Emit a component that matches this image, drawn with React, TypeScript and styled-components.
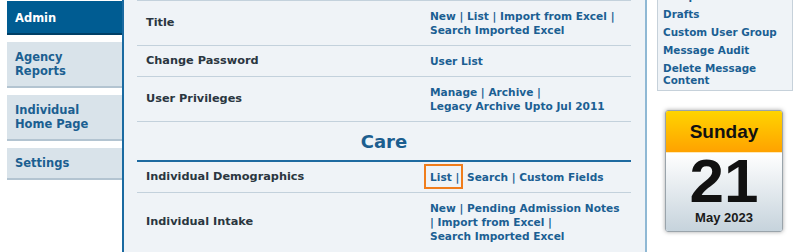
import React from "react";
import styled, { createGlobalStyle } from "styled-components";

const GlobalStyle = createGlobalStyle`
  html, body {
    margin: 0;
    padding: 0;
    background: #ffffff;
    overflow: hidden;
  }
  body {
    font-family: "DejaVu Sans", Verdana, sans-serif;
  }
`;

type Row = { label: string; links: string[]; highlight?: number };

const adminRows: Row[] = [
  { label: "Title", links: ["New", "List", "Import from Excel", "Search Imported Excel"] },
  { label: "Change Password", links: ["User List"] },
  { label: "User Privileges", links: ["Manage", "Archive", "Legacy Archive Upto Jul 2011"] },
];

const careRows: Row[] = [
  { label: "Individual Demographics", links: ["List", "Search", "Custom Fields"], highlight: 0 },
  {
    label: "Individual Intake",
    links: ["New", "Pending Admission Notes", "Import from Excel", "Search Imported Excel"],
  },
];

const tabs = [
  { label: "Admin", active: true },
  { label: "Agency Reports" },
  { label: "Individual Home Page" },
  { label: "Settings" },
];

const messageLinks = ["Compose", "Drafts", "Custom User Group", "Message Audit", "Delete Message Content"];

// links never break inside, only around the " | " separators
const LinkList = ({ links, highlight }: { links: string[]; highlight?: number }) => (
  <Links>
    {links.map((l, i) => {
      const last = i === links.length - 1;
      if (highlight === i) {
        return (
          <React.Fragment key={l}>
            <Highlight>
              <LinkText href="#">{l}</LinkText>
              {!last && " |"}
            </Highlight>{" "}
          </React.Fragment>
        );
      }
      return (
        <React.Fragment key={l}>
          <LinkText href="#">{l}</LinkText>
          {!last && " | "}
        </React.Fragment>
      );
    })}
  </Links>
);

const App = () => {
  return (
    <>
      <GlobalStyle />
      <Page>
        <Nav>
          {tabs.map((t) => (
            <Tab key={t.label} $active={t.active}>
              {t.label}
            </Tab>
          ))}
        </Nav>
        <Main>
          <Table>
            {adminRows.map((r, i) => (
              <TableRow key={r.label} $first={i === 0}>
                <Label>{r.label}</Label>
                <LinkList links={r.links} />
              </TableRow>
            ))}
            <SectionHead>Care</SectionHead>
            {careRows.map((r) => (
              <TableRow key={r.label}>
                <Label>{r.label}</Label>
                <LinkList links={r.links} highlight={r.highlight} />
              </TableRow>
            ))}
          </Table>
        </Main>
        <Side>
          <MessagePanel>
            {messageLinks.map((m) => (
              <SideLink key={m} href="#">
                {m}
              </SideLink>
            ))}
          </MessagePanel>
          <Calendar>
            <CalHead>Sunday</CalHead>
            <CalBody>
              <CalDay>21</CalDay>
              <CalMonth>May 2023</CalMonth>
            </CalBody>
          </Calendar>
        </Side>
      </Page>
    </>
  );
};

export default App;

const Page = styled.div`
  display: flex;
  align-items: flex-start;
  height: 100vh;
`;

const Nav = styled.div`
  display: flex;
  flex-direction: column;
  gap: 7px;
  width: 115px;
  flex-shrink: 0;
  margin: 1px 0 0 7px;
`;

const Tab = styled.div<{ $active?: boolean }>`
  padding: ${(p) => (p.$active ? "10px 8px 8px" : "8px")};
  font-size: 11.5px;
  font-weight: bold;
  line-height: 14px;
  color: ${(p) => (p.$active ? "#ffffff" : "#1b5f91")};
  background: ${(p) => (p.$active ? "#005c92" : "#d9e3ea")};
  border-bottom: 2px solid ${(p) => (p.$active ? "#003f66" : "#b3c4d1")};
`;

const Main = styled.div`
  width: 494px;
  flex-shrink: 0;
  height: 100%;
  padding: 0 14px 0 13px;
  background: #eff3f7;
  border-left: 2px solid #1a6aa1;
  border-right: 2px solid #8fb8d4;
`;

const Table = styled.div`
  display: flex;
  flex-direction: column;
`;

const TableRow = styled.div<{ $first?: boolean }>`
  display: grid;
  grid-template-columns: 293px 194px;
  align-items: center;
  padding: 8px 0;
  border-top: ${(p) => (p.$first ? "1px solid #c3d1dc" : "none")};
  border-bottom: 1px solid #c3d1dc;

  &:last-child {
    border-bottom: none;
  }
`;

const Label = styled.div`
  padding-left: 9px;
  font-size: 11.3px;
  font-weight: bold;
  color: #2a3640;
  line-height: 14px;
`;

const Links = styled.div`
  font-size: 10.6px;
  font-weight: bold;
  line-height: 14px;
  color: #1b5f93;
`;

const LinkText = styled.a`
  color: #1b5f93;
  text-decoration: none;
  white-space: nowrap;
`;

const Highlight = styled.span`
  display: inline-block;
  margin: -7px 0 -6px -6px;
  padding: 4px 2px 3px 4px;
  border: 2px solid #f07d1c;
  line-height: 14px;
  white-space: nowrap;
`;

const SectionHead = styled.div`
  height: 38px;
  line-height: 40px;
  text-align: center;
  font-size: 18px;
  font-weight: bold;
  color: #1c5e8f;
  border-bottom: 2px solid #1e6aa0;
`;

const Side = styled.div`
  display: flex;
  flex-direction: column;
  width: 136px;
  flex-shrink: 0;
  margin: -14px 0 0 10px;
`;

const MessagePanel = styled.div`
  display: flex;
  flex-direction: column;
  gap: 6px;
  padding: 3px 5px 4px;
  background: #eff3f7;
  border: 1px solid #c6d1da;
`;

const SideLink = styled.a`
  font-size: 10.4px;
  font-weight: bold;
  line-height: 12px;
  color: #1b5f93;
  text-decoration: none;
`;

const Calendar = styled.div`
  width: 116px;
  margin: 19px 0 0 8px;
  border: 1px solid #9aa4ab;
  border-radius: 3px;
  overflow: hidden;
  box-shadow: 0 0 4px rgba(0, 0, 0, 0.35);
  font-family: "Liberation Sans", Arial, sans-serif;
  font-weight: bold;
  text-align: center;
  color: #111111;
`;

const CalHead = styled.div`
  height: 41px;
  line-height: 42px;
  font-size: 19px;
  background: linear-gradient(#ffd400, #ffa200);
  border-bottom: 1px solid #ffe9b8;
`;

const CalBody = styled.div`
  padding: 2px 0 6px;
  background: linear-gradient(#ffffff, #c6d3dc);
`;

const CalDay = styled.div`
  font-size: 62px;
  line-height: 52px;
`;

const CalMonth = styled.div`
  margin-top: 3px;
  font-size: 13px;
  line-height: 15px;
  color: #1a1a1a;
`;
